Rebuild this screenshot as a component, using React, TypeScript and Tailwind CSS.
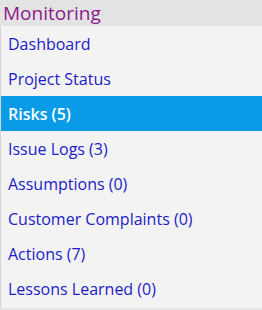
import React from "react";

const items = [
  "Dashboard",
  "Project Status",
  "Risks (5)",
  "Issue Logs (3)",
  "Assumptions (0)",
  "Customer Complaints (0)",
  "Actions (7)",
  "Lessons Learned (0)",
];

export default function App() {
  return (
    <div
      className="w-[262px] h-[310px] bg-[#e6e6e6]"
      style={{ fontFamily: '"Open Sans", "Noto Sans", sans-serif' }}
    >
      <div className="h-[26px] bg-[#e3e3e3] pl-[3px] flex items-end">
        <span className="text-[19px] leading-[26px] text-[#8c1a8c]">Monitoring</span>
      </div>
      <div className="h-[282px] bg-[#f3f3f3] border-l border-[#d4d4d4]">
        {items.map((t, i) => (
          <div
            key={t}
            className={
              i === 2
                ? "h-[35px] flex items-center pl-[7px] bg-[#0a9be8] text-white text-[16px] font-semibold"
                : "h-[35px] flex items-center pl-[7px] text-[#1c1cc8] text-[16px] font-medium"
            }
          >
            {t}
          </div>
        ))}
      </div>
    </div>
  );
}
